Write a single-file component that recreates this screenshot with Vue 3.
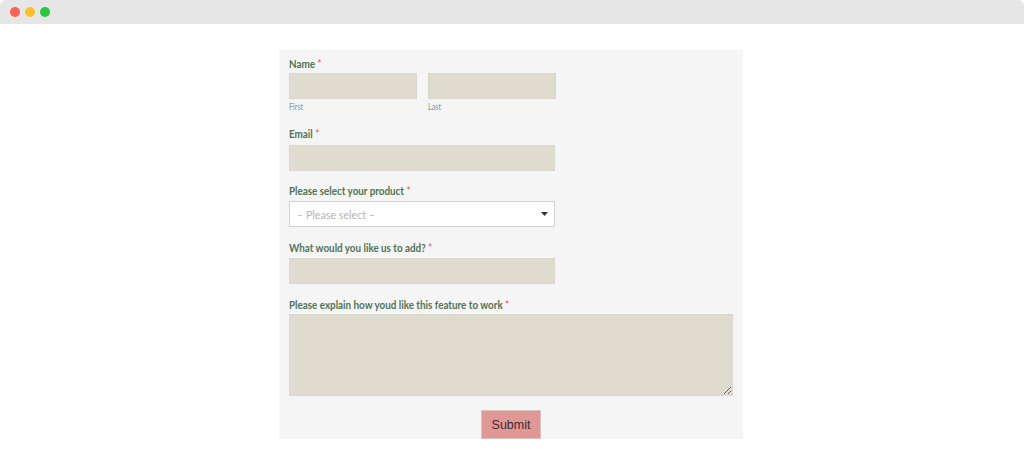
<template>
  <div class="page">
    <div class="titlebar">
      <span class="dot red"></span>
      <span class="dot yellow"></span>
      <span class="dot green"></span>
    </div>

    <div class="content">
      <form class="form" @submit.prevent>
        <div class="field name-field">
          <label class="label">Name <span class="req">*</span></label>
          <div class="name-row">
            <div class="name-col">
              <input class="input" type="text" />
              <span class="sub">First</span>
            </div>
            <div class="name-col">
              <input class="input" type="text" />
              <span class="sub">Last</span>
            </div>
          </div>
        </div>

        <div class="field email-field">
          <label class="label">Email <span class="req">*</span></label>
          <input class="input wide" type="email" />
        </div>

        <div class="field select-field">
          <label class="label">Please select your product <span class="req">*</span></label>
          <div class="select wide">
            <span class="placeholder">– Please select –</span>
            <svg class="caret" width="7" height="4" viewBox="0 0 7 4">
              <path d="M0 0h7L3.5 4z" fill="#333" />
            </svg>
          </div>
        </div>

        <div class="field add-field">
          <label class="label">What would you like us to add? <span class="req">*</span></label>
          <input class="input wide" type="text" />
        </div>

        <div class="field explain-field">
          <label class="label">Please explain how youd like this feature to work <span class="req">*</span></label>
          <textarea class="textarea"></textarea>
        </div>

        <div class="actions">
          <button class="submit" type="submit">Submit</button>
        </div>
      </form>
    </div>
  </div>
</template>

<script setup>
</script>

<style>
html,
body {
  margin: 0;
  background: #fff;
}
</style>

<style scoped>
.page {
  width: 1024px;
  height: 476px;
  overflow: hidden;
  background: #fff;
  font-family: Lato, "Liberation Sans", sans-serif;
}

.titlebar {
  height: 24px;
  background: #e6e6e6;
  display: flex;
  align-items: center;
  gap: 5px;
  padding-left: 10px;
  border-top-left-radius: 6px;
  border-top-right-radius: 6px;
}

.dot {
  width: 10px;
  height: 10px;
  border-radius: 50%;
}

.red { background: #ff5f57; }
.yellow { background: #ffbd2e; }
.green { background: #28c840; }

.content {
  display: flex;
  justify-content: center;
  padding: 26px 2px 0 0;
}

.form {
  width: 464px;
  height: 389px;
  box-sizing: border-box;
  background: #f5f5f5;
  padding: 7px 10px 0;
  overflow: hidden;
}

.field {
  display: flex;
  flex-direction: column;
}

/* the original face is tall and narrow, squeeze Lato to get close */
.label {
  display: block;
  height: 13px;
  line-height: 13px;
  font-size: 11px;
  font-weight: 700;
  color: #4f7355;
  white-space: nowrap;
  transform: scaleX(0.895);
  transform-origin: left center;
}

.req {
  color: #e8504f;
  font-weight: 400;
}

.name-field .label { margin-bottom: 3px; }
.email-field { margin-top: 14px; }
.email-field .label { margin-bottom: 5px; }
.select-field { margin-top: 13px; }
.select-field .label { margin-bottom: 4px; }
.add-field { margin-top: 14px; }
.add-field .label { margin-bottom: 4px; }
.explain-field { margin-top: 14px; }
.explain-field .label { margin-bottom: 3px; }

.name-row {
  display: flex;
  gap: 11px;
}

.name-col {
  width: 128px;
  display: flex;
  flex-direction: column;
}

.input,
.textarea {
  display: block;
  box-sizing: border-box;
  width: 100%;
  margin: 0;
  background: #dfdbcf;
  border: 1px solid #d9d6cc;
  border-radius: 0;
  outline: none;
}

.input {
  height: 26px;
}

.wide {
  width: 266px;
}

.sub {
  margin-top: 3px;
  height: 11px;
  line-height: 11px;
  font-size: 8.5px;
  color: #7f9a88;
  transform: scaleX(0.85);
  transform-origin: left center;
}

.select {
  box-sizing: border-box;
  height: 26px;
  background: #fff;
  border: 1px solid #d2d2d2;
  display: flex;
  align-items: center;
  justify-content: space-between;
  padding: 0 6px 0 7px;
}

.placeholder {
  font-size: 10.7px;
  color: #b4b4b4;
}

.textarea {
  height: 82px;
  resize: vertical;
}

.actions {
  display: flex;
  justify-content: center;
  margin-top: 14px;
}

.submit {
  width: 60px;
  height: 29px;
  box-sizing: border-box;
  background: #e29797;
  border: 1px solid #d9c4bd;
  border-radius: 0;
  padding: 0;
  font-family: "Liberation Sans", Arial, sans-serif;
  font-size: 12.5px;
  color: #3f2a30;
}
</style>
